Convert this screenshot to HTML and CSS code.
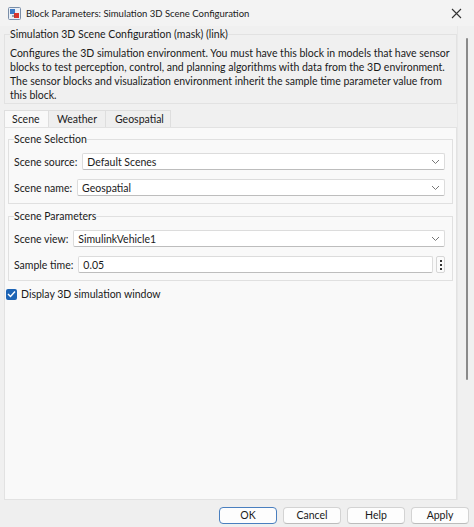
FILE: index.html
```html
<!DOCTYPE html>
<html>
<head>
<meta charset="utf-8">
<link rel="stylesheet" href="styles.css">
</head>
<body>
<div class="window">
  <div class="titlebar">
    <svg class="app-icon" width="13" height="13" viewBox="0 0 13 13">
      <rect x="0.5" y="0.5" width="12" height="12" rx="1" fill="#e8eef6" stroke="#7a8ea8"/>
      <rect x="2" y="2" width="5" height="5" fill="#3b79c4"/>
      <rect x="6" y="6" width="5" height="5" fill="#d9342b"/>
      <path d="M4 9 L7 9" stroke="#555" stroke-width="1"/>
    </svg>
    <span class="title">Block Parameters: Simulation 3D Scene Configuration</span>
    <svg class="close" width="11" height="11" viewBox="0 0 11 11">
      <path d="M1 1 L10 10 M10 1 L1 10" stroke="#333" stroke-width="1.1"/>
    </svg>
  </div>
  <div class="main">
    <div class="content">
      <fieldset class="desc">
        <legend>Simulation 3D Scene Configuration (mask) (link)</legend>
        <p>Configures the 3D simulation environment. You must have this block in models that have sensor<br>blocks to test perception, control, and planning algorithms with data from the 3D environment.<br>The sensor blocks and visualization environment inherit the sample time parameter value from<br>this block.</p>
      </fieldset>
      <div class="tabs">
        <div class="tab active">Scene</div>
        <div class="tab weather">Weather</div>
        <div class="tab geo">Geospatial</div>
      </div>
      <div class="panel">
        <fieldset class="group">
          <legend>Scene Selection</legend>
          <div class="row">
            <span class="label">Scene source:</span>
            <div class="select"><span>Default Scenes</span><svg width="9" height="6" viewBox="0 0 9 6"><path d="M1 1 L4.5 4.5 L8 1" fill="none" stroke="#777" stroke-width="1"/></svg></div>
          </div>
          <div class="row">
            <span class="label">Scene name:</span>
            <div class="select"><span>Geospatial</span><svg width="9" height="6" viewBox="0 0 9 6"><path d="M1 1 L4.5 4.5 L8 1" fill="none" stroke="#777" stroke-width="1"/></svg></div>
          </div>
        </fieldset>
        <fieldset class="group">
          <legend>Scene Parameters</legend>
          <div class="row">
            <span class="label">Scene view:</span>
            <div class="select"><span>SimulinkVehicle1</span><svg width="9" height="6" viewBox="0 0 9 6"><path d="M1 1 L4.5 4.5 L8 1" fill="none" stroke="#777" stroke-width="1"/></svg></div>
          </div>
          <div class="row">
            <span class="label">Sample time:</span>
            <div class="input">0.05</div>
            <div class="more"><i></i><i></i><i></i></div>
          </div>
        </fieldset>
        <label class="check">
          <span class="box"><svg width="9" height="8" viewBox="0 0 9 8"><path d="M1 4 L3.5 6.5 L8 1.5" fill="none" stroke="#fff" stroke-width="1.4"/></svg></span>
          <span>Display 3D simulation window</span>
        </label>
      </div>
    </div>
    <div class="scroll"><div class="thumb"></div></div>
  </div>
  <div class="buttons">
    <button class="btn default">OK</button>
    <button class="btn">Cancel</button>
    <button class="btn">Help</button>
    <button class="btn">Apply</button>
  </div>
</div>
</body>
</html>
```
FILE: styles.css
```css
* { box-sizing: border-box; }
html, body { margin: 0; padding: 0; }
body {
  width: 474px;
  height: 527px;
  overflow: hidden;
  font-family: "Lato", "Noto Sans", sans-serif;
  font-size: 10.5px;
  color: #1a1a1a;
  background: #f0f0f0;
}
.window {
  width: 474px;
  height: 527px;
  display: flex;
  flex-direction: column;
}
.titlebar {
  height: 26px;
  flex: none;
  display: flex;
  align-items: center;
  padding-left: 8px;
  background: #f3f3f3;
}
.app-icon { flex: none; margin-right: 5px; }
.title { flex: 1; color: #1a1a1a; font-size: 9.5px; }
.close { margin-right: 12px; }
.main {
  flex: none;
  height: 474px;
  display: flex;
}
.content {
  width: 457px;
  padding-left: 4px;
  padding-top: 1px;
  display: flex;
  flex-direction: column;
}
.desc {
  margin: 0;
  padding: 5px 5px 1px 5px;
  border: 1px solid #e2e2e2;
  background: #f0f0f0;
  min-width: 0;
}
.desc legend {
  padding: 0;
  margin-left: 0;
  line-height: 14px;
  color: #1a1a1a;
}
.desc p {
  margin: 0;
  line-height: 14px;
  white-space: nowrap;
}
.tabs {
  display: flex;
  margin-top: 6px;
  height: 17px;
}
.tab {
  height: 17px;
  line-height: 16px;
  border: 1px solid #dedede;
  border-bottom: none;
  background: #efefef;
}
.tab + .tab { border-left: none; }
.tab.active { background: #f9f9f9; width: 45px; padding-left: 7px; }
.tab.weather { width: 57px; padding-left: 8px; }
.tab.geo { width: 65px; padding-left: 9px; }
.panel {
  flex: 1;
  background: #f9f9f9;
  border: 1px solid #e2e2e2;
  padding: 4px 3px 0 3px;
  display: flex;
  flex-direction: column;
}
.group {
  margin: 0 0 5px 0;
  padding: 7px 7px 7px 5px;
  border: 1px solid #e0e0e0;
  min-width: 0;
  display: flex;
  flex-direction: column;
  gap: 9px;
}
.group + .group { margin-bottom: 0; }
.group legend {
  padding: 0;
  margin-left: 0;
  line-height: 14px;
}
.row {
  display: flex;
  align-items: center;
  gap: 5px;
  height: 17px;
}
.label { flex: none; }
.select, .input {
  flex: 1;
  height: 17px;
  background: #fff;
  border: 1px solid #dcdcdc;
  border-bottom-color: #bdbdbd;
  border-radius: 2px;
  display: flex;
  align-items: center;
  padding-left: 4px;
}
.select span { flex: 1; }
.select svg { margin-right: 4px; }
.more {
  flex: none;
  width: 9px;
  height: 17px;
  margin-left: -2px;
  border: 1px solid #d6d6d6;
  border-radius: 2px;
  background: #fbfbfb;
  display: flex;
  flex-direction: column;
  align-items: center;
  justify-content: center;
  gap: 2px;
}
.more i {
  display: block;
  width: 2px;
  height: 2px;
  background: #333;
}
.check {
  display: flex;
  align-items: center;
  gap: 4px;
  margin-top: 7px;
  margin-left: -2px;
}
.box {
  width: 11px;
  height: 11px;
  border-radius: 2px;
  background: #1d64b5;
  display: flex;
  align-items: center;
  justify-content: center;
}
.scroll {
  width: 17px;
  position: relative;
  background: #f0f0f0;
  border-left: 1px solid #e8e8e8;
}
.thumb {
  position: absolute;
  left: 8px;
  top: 12px;
  width: 2px;
  height: 342px;
  background: #8a8a8a;
  border-radius: 1px;
}
.buttons {
  flex: 1;
  display: flex;
  justify-content: flex-end;
  align-items: flex-start;
  gap: 6px;
  padding: 7px 5px 0 0;
  background: #efefef;
}
.btn {
  width: 58px;
  height: 17px;
  padding: 0;
  font-family: inherit;
  font-size: 10.5px;
  color: #1a1a1a;
  background: #fdfdfd;
  border: 1px solid #d3d3d3;
  border-bottom-color: #bcbcbc;
  border-radius: 4px;
  line-height: 15px;
}
.btn.default { border-color: #4a7fbf; }
```
